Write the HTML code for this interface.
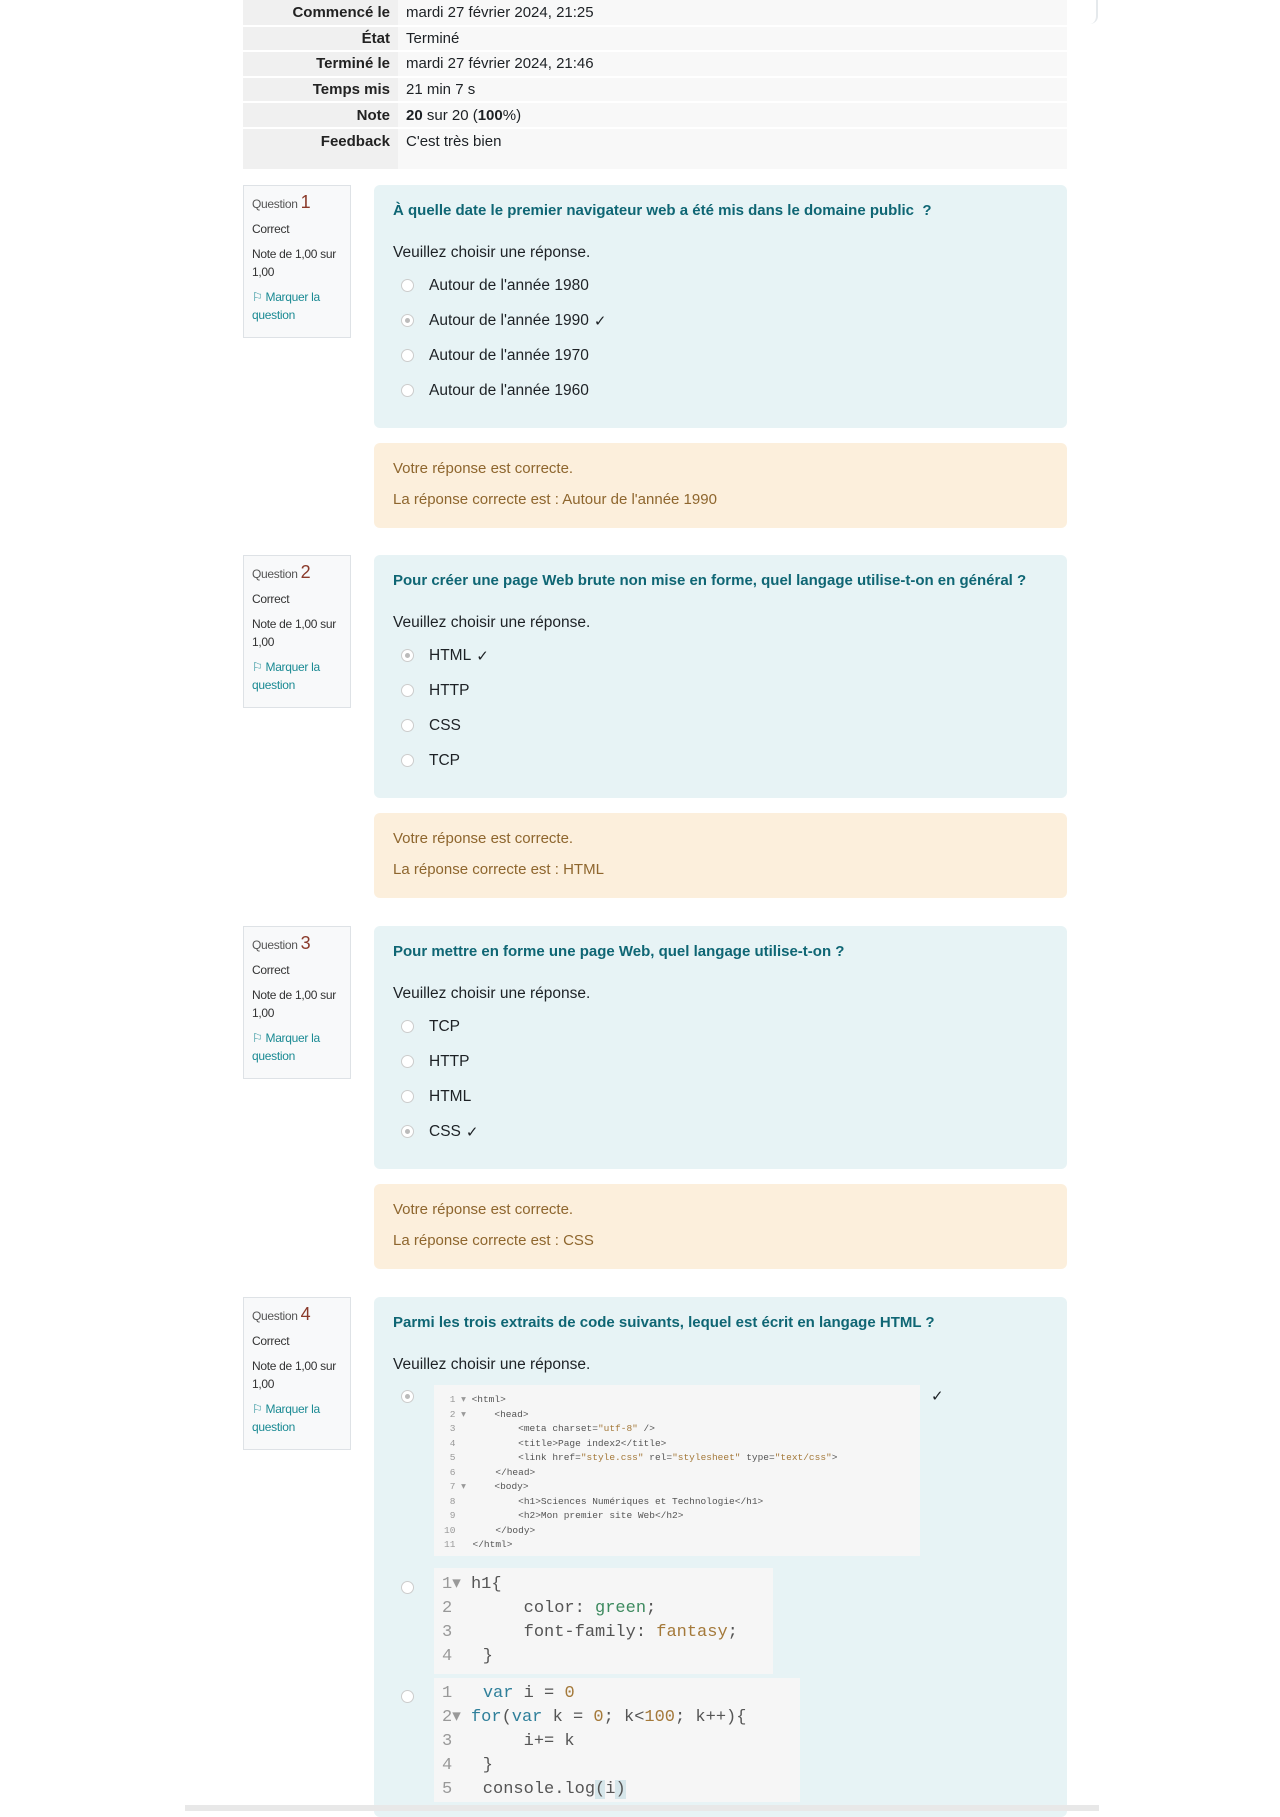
<!DOCTYPE html>
<html><head><meta charset="utf-8"><style>
*{margin:0;padding:0;box-sizing:border-box}
body{width:1280px;height:1811px;background:#fff;font-family:"Liberation Sans",sans-serif;position:relative;overflow:hidden;color:#1d2125}
.abs{position:absolute}
table{position:absolute;left:243px;top:0;width:824px;border-collapse:collapse;font-size:15px}
td{height:25.6px;border-bottom:2px solid #fff;padding:0 8px;vertical-align:middle}
td.l{background:#f0f0f0;text-align:right;font-weight:bold;width:155px;color:#222}
td.v{background:#f8f8f8}
.info{position:absolute;left:243px;width:108px;height:153px;background:#f8f9fa;border:1px solid #dee2e6;padding:7px 8px;font-size:12px;letter-spacing:-0.3px;line-height:18px;color:#333}
.info .q{color:#555}.info .q b{font-size:18px;color:#8a3a2a;font-weight:normal}
.info p{margin-bottom:7px}
.info a{color:#1a8a93}
.box{position:absolute;left:374px;width:693px;height:243px;background:#e7f3f5;border-radius:6px;padding:16px 19px}
.qt{color:#0f6674;font-weight:bold;font-size:15px;line-height:20px}
.pr{font-size:15.5px;margin-top:23px}
.opt{height:35px;font-size:15.5px;display:flex;align-items:center;padding-left:8px;margin-top:0}
.pr + .opt{margin-top:6px}
.r{display:block;width:13px;height:13px;border:1px solid #ccc;border-radius:50%;background:#fff;margin-right:15px;flex:none;position:relative}
.r.on::after{content:"";position:absolute;left:3px;top:3px;width:5px;height:5px;border-radius:50%;background:#bbb}
.fb{position:absolute;left:374px;width:693px;height:85px;background:#fcefdc;border-radius:6px;padding:10px 19px;color:#8e662e;font-size:15px;line-height:31px}
.ck{margin-left:5px;font-size:15px}
pre{font-family:"Liberation Mono",monospace;position:absolute;background:#f6f6f6;color:#555}
.s{color:#a4793a}.k{color:#2f7f9a}.g{color:#3d8a5f}.n{color:#999}
</style></head><body>
<div class="abs" style="left:1090px;top:0;width:8px;height:24px;border-right:2px solid #e5e9ec;border-radius:0 0 8px 0"></div>
<table>
<tr><td class="l">Commencé le</td><td class="v">mardi 27 février 2024, 21:25</td></tr>
<tr><td class="l">État</td><td class="v">Terminé</td></tr>
<tr><td class="l">Terminé le</td><td class="v">mardi 27 février 2024, 21:46</td></tr>
<tr><td class="l">Temps mis</td><td class="v">21 min 7 s</td></tr>
<tr><td class="l">Note</td><td class="v"><b>20</b> sur 20 (<b>100</b>%)</td></tr>
<tr><td class="l" style="height:42px;vertical-align:top;padding-top:4px">Feedback</td><td class="v" style="vertical-align:top;padding-top:4px">C'est très bien</td></tr>
</table>

<div class="info" style="top:185px"><p class="q">Question <b>1</b></p><p>Correct</p><p>Note de 1,00 sur 1,00</p><p><a>⚐ Marquer la question</a></p></div>
<div class="box" style="top:185px"><div class="qt">À quelle date le premier navigateur web a été mis dans le domaine public&nbsp; ?</div><div class="pr">Veuillez choisir une réponse.</div>
<div class="opt"><span class="r"></span>Autour de l'année 1980</div>
<div class="opt"><span class="r on"></span>Autour de l'année 1990<span class="ck">✓</span></div>
<div class="opt"><span class="r"></span>Autour de l'année 1970</div>
<div class="opt"><span class="r"></span>Autour de l'année 1960</div></div>
<div class="fb" style="top:443px">Votre réponse est correcte.<br>La réponse correcte est : Autour de l'année 1990</div>

<div class="info" style="top:555px"><p class="q">Question <b>2</b></p><p>Correct</p><p>Note de 1,00 sur 1,00</p><p><a>⚐ Marquer la question</a></p></div>
<div class="box" style="top:555px"><div class="qt">Pour créer une page Web brute non mise en forme, quel langage utilise-t-on en général ?</div><div class="pr">Veuillez choisir une réponse.</div>
<div class="opt"><span class="r on"></span>HTML<span class="ck">✓</span></div>
<div class="opt"><span class="r"></span>HTTP</div>
<div class="opt"><span class="r"></span>CSS</div>
<div class="opt"><span class="r"></span>TCP</div></div>
<div class="fb" style="top:813px">Votre réponse est correcte.<br>La réponse correcte est : HTML</div>

<div class="info" style="top:926px"><p class="q">Question <b>3</b></p><p>Correct</p><p>Note de 1,00 sur 1,00</p><p><a>⚐ Marquer la question</a></p></div>
<div class="box" style="top:926px"><div class="qt">Pour mettre en forme une page Web, quel langage utilise-t-on ?</div><div class="pr">Veuillez choisir une réponse.</div>
<div class="opt"><span class="r"></span>TCP</div>
<div class="opt"><span class="r"></span>HTTP</div>
<div class="opt"><span class="r"></span>HTML</div>
<div class="opt"><span class="r on"></span>CSS<span class="ck">✓</span></div></div>
<div class="fb" style="top:1184px">Votre réponse est correcte.<br>La réponse correcte est : CSS</div>

<div class="info" style="top:1297px"><p class="q">Question <b>4</b></p><p>Correct</p><p>Note de 1,00 sur 1,00</p><p><a>⚐ Marquer la question</a></p></div>
<div class="box" style="top:1297px;height:520px"><div class="qt">Parmi les trois extraits de code suivants, lequel est écrit en langage HTML ?</div><div class="pr">Veuillez choisir une réponse.</div></div>
<span class="r on abs" style="left:401px;top:1390px"></span>
<span class="abs" style="left:931px;top:1387px;font-size:15px">✓</span>
<pre style="left:434px;top:1385px;width:486px;height:171px;font-size:9.5px;line-height:14.5px;padding:8px 10px"><span class="n"> 1 ▾</span> &lt;html&gt;
<span class="n"> 2 ▾</span>     &lt;head&gt;
<span class="n"> 3  </span>         &lt;meta charset=<span class="s">"utf-8"</span> /&gt;
<span class="n"> 4  </span>         &lt;title&gt;Page index2&lt;/title&gt;
<span class="n"> 5  </span>         &lt;link href=<span class="s">"style.css"</span> rel=<span class="s">"stylesheet"</span> type=<span class="s">"text/css"</span>&gt;
<span class="n"> 6  </span>     &lt;/head&gt;
<span class="n"> 7 ▾</span>     &lt;body&gt;
<span class="n"> 8  </span>         &lt;h1&gt;Sciences Numériques et Technologie&lt;/h1&gt;
<span class="n"> 9  </span>         &lt;h2&gt;Mon premier site Web&lt;/h2&gt;
<span class="n">10  </span>     &lt;/body&gt;
<span class="n">11  </span> &lt;/html&gt;</pre>
<span class="r abs" style="left:401px;top:1568px"></span>
<pre style="left:434px;top:1568px;width:339px;height:106px;font-size:17px;line-height:24px;padding:5px 8px"><span class="n">1▾</span> h1{
<span class="n">2 </span>      color: <span class="g">green</span>;
<span class="n">3 </span>      font-family: <span class="s">fantasy</span>;
<span class="n">4 </span>  }</pre>
<span class="r abs" style="left:401px;top:1664px"></span>
<pre style="left:434px;top:1678px;width:366px;height:124px;font-size:17px;line-height:24px;padding:4px 8px"><span class="n">1 </span>  <span class="k">var</span> i = <span class="s">0</span>
<span class="n">2▾</span> <span class="k">for</span>(<span class="k">var</span> k = <span class="s">0</span>; k&lt;<span class="s">100</span>; k++){
<span class="n">3 </span>      i+= k
<span class="n">4 </span>  }
<span class="n">5 </span>  console.log<span style="background:#d6e6ea">(</span>i<span style="background:#d6e6ea">)</span></pre>
<div class="abs" style="left:185px;top:1805px;width:914px;height:6px;background:#e8e8e8"></div>
</body></html>
